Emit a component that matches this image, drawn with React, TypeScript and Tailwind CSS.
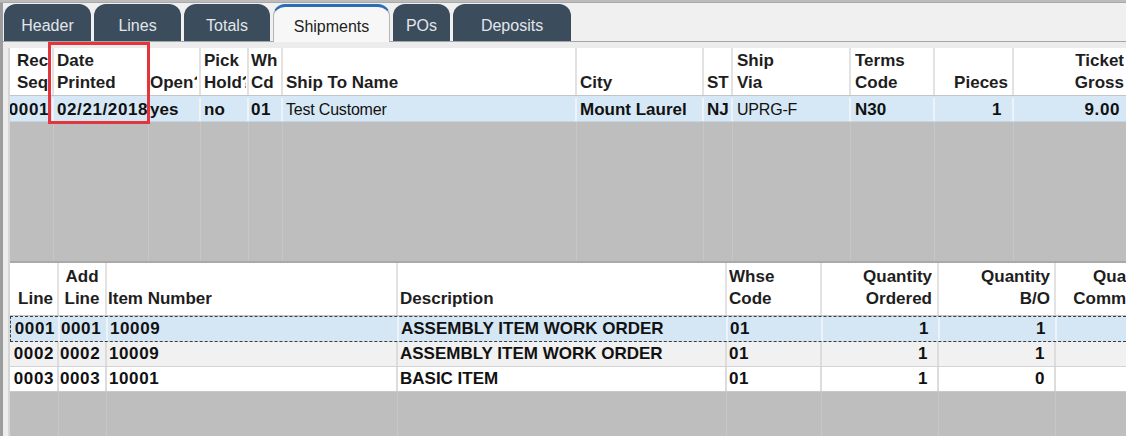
import React from "react";

type Col = {
    w: string;
    head: [string, string];
    hCls: string;
    dCls: string;
};

type Cell = { text: string; regular?: boolean };

const upperCols: Col[] = [
    { w: 'w-[44px]', head: ['Rec', 'Seq'], hCls: 'text-left pl-[7px]', dCls: 'justify-end pr-[3px]' },
    { w: 'w-[95px]', head: ['Date', 'Printed'], hCls: 'text-left pl-[3px]', dCls: 'justify-start pl-[3px]' },
    { w: 'w-[52px]', head: ['', 'Open?'], hCls: 'text-left pl-[1px] pr-[2px]', dCls: 'justify-start pl-[1px]' },
    { w: 'w-[48px]', head: ['Pick', 'Hold?'], hCls: 'text-left pl-[3px] pr-[1px]', dCls: 'justify-start pl-[3px]' },
    { w: 'w-[34px]', head: ['Wh', 'Cd'], hCls: 'text-left pl-[2px]', dCls: 'justify-start pl-[2px]' },
    { w: 'w-[294px]', head: ['', 'Ship To Name'], hCls: 'text-left pl-[3px]', dCls: 'justify-start pl-[3px]' },
    { w: 'w-[127px]', head: ['', 'City'], hCls: 'text-left pl-[3px]', dCls: 'justify-start pl-[3px]' },
    { w: 'w-[29px]', head: ['', 'ST'], hCls: 'text-left pl-[3px]', dCls: 'justify-start pl-[3px]' },
    { w: 'w-[118px]', head: ['Ship', 'Via'], hCls: 'text-left pl-[4px]', dCls: 'justify-start pl-[4px]' },
    { w: 'w-[84px]', head: ['Terms', 'Code'], hCls: 'text-left pl-[4px]', dCls: 'justify-start pl-[4px]' },
    { w: 'w-[79px]', head: ['', 'Pieces'], hCls: 'text-right pr-[4px]', dCls: 'justify-end pr-[10px]' },
    { w: 'w-[114px]', head: ['Ticket', 'Gross'], hCls: 'text-right pr-[2px]', dCls: 'justify-end pr-[6px]' },
];

const upperRows: Cell[][] = [
    [
        { text: '0001' }, { text: '02/21/2018' }, { text: 'yes' }, { text: 'no' }, { text: '01' },
        { text: 'Test Customer', regular: true }, { text: 'Mount Laurel' }, { text: 'NJ' },
        { text: 'UPRG-F', regular: true }, { text: 'N30' }, { text: '1' }, { text: '9.00' },
    ],
];

const lowerCols: Col[] = [
    { w: 'w-[49px]', head: ['', 'Line'], hCls: 'text-right pr-[4px]', dCls: 'justify-end pr-[3px]' },
    { w: 'w-[48px]', head: ['Add', 'Line'], hCls: 'text-center', dCls: 'justify-start pl-[1px]' },
    { w: 'w-[291px]', head: ['', 'Item Number'], hCls: 'text-left pl-[1px]', dCls: 'justify-start pl-[2px]' },
    { w: 'w-[329px]', head: ['', 'Description'], hCls: 'text-left pl-[2px]', dCls: 'justify-start pl-[2px]' },
    { w: 'w-[95px]', head: ['Whse', 'Code'], hCls: 'text-left pl-[2px]', dCls: 'justify-start pl-[2px]' },
    { w: 'w-[117px]', head: ['Quantity', 'Ordered'], hCls: 'text-right pr-[5px]', dCls: 'justify-end pr-[9px]' },
    { w: 'w-[117px]', head: ['Quantity', 'B/O'], hCls: 'text-right pr-[4px]', dCls: 'justify-end pr-[9px]' },
    { w: 'w-[114px]', head: ['Quantity', 'Committed'], hCls: 'text-right pr-[6px]', dCls: 'justify-end pr-[9px]' },
];

const lowerRows: Cell[][] = [
    ['0001', '0001', '10009', 'ASSEMBLY ITEM WORK ORDER', '01', '1', '1', ''].map(text => ({ text })),
    ['0002', '0002', '10009', 'ASSEMBLY ITEM WORK ORDER', '01', '1', '1', ''].map(text => ({ text })),
    ['0003', '0003', '10001', 'BASIC ITEM', '01', '1', '0', ''].map(text => ({ text })),
];

const tabs = [
    { label: 'Header', w: 'w-[87px]' },
    { label: 'Lines', w: 'w-[87px]' },
    { label: 'Totals', w: 'w-[86px]' },
    { label: 'Shipments', w: 'w-[117px]', active: true },
    { label: 'POs', w: 'w-[57px]' },
    { label: 'Deposits', w: 'w-[118px]' },
];

const isNumeric = (s: string) => /^[0-9./]+$/.test(s);

function GridHeader({ cols, height, pad }: { cols: Col[]; height: string; pad: string }) {
    return (
        <div className={`flex ${height} bg-white border-b border-[#c4c4c4] shrink-0`}>
            {cols.map((c, i) => (
                <div
                    key={i}
                    className={`${c.w} shrink-0 h-full border-r-2 border-[#e2e2e2] flex flex-col justify-end ${pad} overflow-hidden font-bold text-[17px] text-[#1e1e1e] ${c.hCls}`}
                >
                    <div className="leading-[22px] h-[22px] whitespace-nowrap overflow-hidden">{c.head[0]}</div>
                    <div className="leading-[22px] h-[22px] whitespace-nowrap overflow-hidden">{c.head[1]}</div>
                </div>
            ))}
        </div>
    );
}

function GridRow({ cols, cells, rowCls, sepCls }: { cols: Col[]; cells: Cell[]; rowCls: string; sepCls: string }) {
    return (
        <div className={`flex shrink-0 ${rowCls}`}>
            {cols.map((c, i) => {
                const cell = cells[i];
                const textCls = cell.regular
                    ? 'font-normal text-[16px] tracking-[-0.2px]'
                    : isNumeric(cell.text)
                        ? 'font-bold text-[17px] tracking-[0.6px]'
                        : 'font-bold text-[17px]';
                return (
                    <div
                        key={i}
                        className={`${c.w} shrink-0 h-full flex items-center overflow-hidden whitespace-nowrap text-[#111] border-r-2 ${sepCls} ${c.dCls}`}
                    >
                        <span className={textCls}>{cell.text}</span>
                    </div>
                );
            })}
        </div>
    );
}

function Filler({ cols }: { cols: Col[] }) {
    return (
        <div className="flex flex-1 min-h-0 bg-[#bfbebf]">
            {cols.map((c, i) => (
                <div key={i} className={`${c.w} shrink-0 h-full border-r border-[#c8c7c8]`} />
            ))}
        </div>
    );
}

export default function App() {
    return (
        <div className="relative w-[1126px] h-[436px] overflow-hidden bg-[#f0f0f0] flex flex-col font-['Liberation_Sans',Arial,sans-serif]">
            <div className="h-[3px] shrink-0 bg-[#bcbcbc] border-b border-[#a9a9a9]" />
            <div className="flex flex-1 min-h-0">
                <div className="w-[3px] shrink-0 bg-[#9c9c9c]" />
                <div className="flex-1 min-w-0 flex flex-col">
                    {/* tab strip */}
                    <div className="h-[39px] shrink-0 flex items-end gap-[3px] pl-[1px] border-b border-[#a6a6a6]">
                        {tabs.map(t =>
                            t.active ? (
                                <div
                                    key={t.label}
                                    className={`${t.w} h-[38px] -mb-px pt-[5px] shrink-0 flex items-center justify-center rounded-t-[12px] bg-[#f7f7f7] border-t-[3px] border-x border-t-[#2b6cb3] border-x-[#b4b4b4] text-[16px] text-[#222]`}
                                >
                                    {t.label}
                                </div>
                            ) : (
                                <div
                                    key={t.label}
                                    className={`${t.w} h-[37px] pt-[7px] shrink-0 flex items-center justify-center rounded-t-[12px] bg-[#3b4c5d] text-[16px] text-[#e2e6ea]`}
                                >
                                    {t.label}
                                </div>
                            )
                        )}
                    </div>

                    {/* body */}
                    <div className="flex-1 min-h-0 flex flex-col pt-[6px] pl-[5px] bg-[#ececec]">
                        <div className="flex-1 min-h-0 flex flex-col border-l-2 border-[#d6d6d6] overflow-hidden">
                            {/* shipments grid */}
                            <div className="h-[213px] shrink-0 flex flex-col overflow-hidden">
                                <GridHeader cols={upperCols} height="h-[48px]" pad="pb-[1px]" />
                                {upperRows.map((r, i) => (
                                    <GridRow key={i} cols={upperCols} cells={r} rowCls="h-[26px] pt-[2px] bg-[#d6e8f6] border-b border-[#c5d5e3]" sepCls="border-[#edf3f9]" />
                                ))}
                                <Filler cols={upperCols} />
                            </div>

                            {/* lines grid */}
                            <div className="flex-1 min-h-0 flex flex-col overflow-hidden border-t-2 border-[#a9a9a9]">
                                <GridHeader cols={lowerCols} height="h-[53px]" pad="pb-[5px]" />
                                <GridRow
                                    cols={lowerCols}
                                    cells={lowerRows[0]}
                                    rowCls="h-[26px] bg-[#d5e7f5] border-y border-l border-dashed border-[#3c3c3c]"
                                    sepCls="border-[#edf3f9]"
                                />
                                <GridRow
                                    cols={lowerCols}
                                    cells={lowerRows[1]}
                                    rowCls="h-[25px] bg-[#f1f1f1] border-b border-[#d4d4d4]"
                                    sepCls="border-[#dcdcdc]"
                                />
                                <GridRow
                                    cols={lowerCols}
                                    cells={lowerRows[2]}
                                    rowCls="h-[25px] bg-white border-b border-[#c9c9c9]"
                                    sepCls="border-[#dcdcdc]"
                                />
                                <Filler cols={lowerCols} />
                            </div>
                        </div>
                    </div>
                </div>
            </div>

            {/* highlight box */}
            <div className="absolute left-[48px] top-[42px] w-[102px] h-[82px] border-[3px] border-[#e2363c]" />
        </div>
    );
}
